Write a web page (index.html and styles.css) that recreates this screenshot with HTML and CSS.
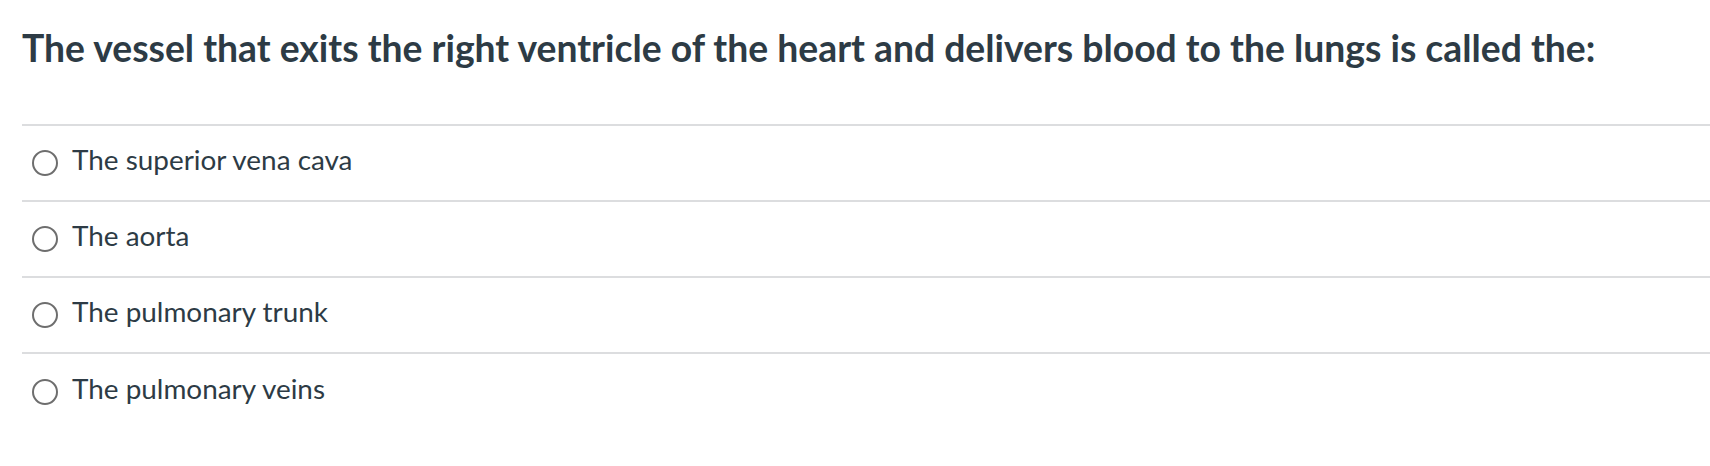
FILE: index.html
```html
<!DOCTYPE html>
<html>
<head>
<meta charset="utf-8">
<link rel="stylesheet" href="styles.css">
</head>
<body>
<div class="question">
  <h1 class="question-text">The vessel that exits the right ventricle of the heart and delivers blood to the lungs is called the:</h1>
  <div class="answers">
    <label class="answer"><span class="radio"></span><span class="answer-text">The superior vena cava</span></label>
    <label class="answer"><span class="radio"></span><span class="answer-text">The aorta</span></label>
    <label class="answer"><span class="radio"></span><span class="answer-text">The pulmonary trunk</span></label>
    <label class="answer last"><span class="radio"></span><span class="answer-text">The pulmonary veins</span></label>
  </div>
</div>
</body>
</html>
```
FILE: styles.css
```css
html, body {
  margin: 0;
  padding: 0;
  background: #ffffff;
}
body {
  font-family: Lato, "Open Sans", "Liberation Sans", sans-serif;
  color: #2d3b45;
}
.question {
  padding: 0 0 0 22px;
}
.question-text {
  margin: 0;
  padding: 23px 0 51px 0;
  font-size: 37.3px;
  font-weight: 700;
  line-height: 50px;
  height: 50px;
  box-sizing: content-box;
}
.answers {
  border-top: 2px solid #dcdddf;
}
.answer {
  display: flex;
  align-items: center;
  border-bottom: 2px solid #dcdddf;
  padding-left: 10px;
  padding-bottom: 8px;
  box-sizing: border-box;
  height: 76px;
}
.answer.last {
  border-bottom: none;
}
.radio {
  width: 22px;
  height: 22px;
  border: 2px solid #6e6e6e;
  border-radius: 50%;
  flex: none;
  margin-top: 8px;
}
.answer-text {
  margin-left: 14px;
  font-size: 27.9px;
  line-height: 34px;
  font-weight: 400;
}
```
